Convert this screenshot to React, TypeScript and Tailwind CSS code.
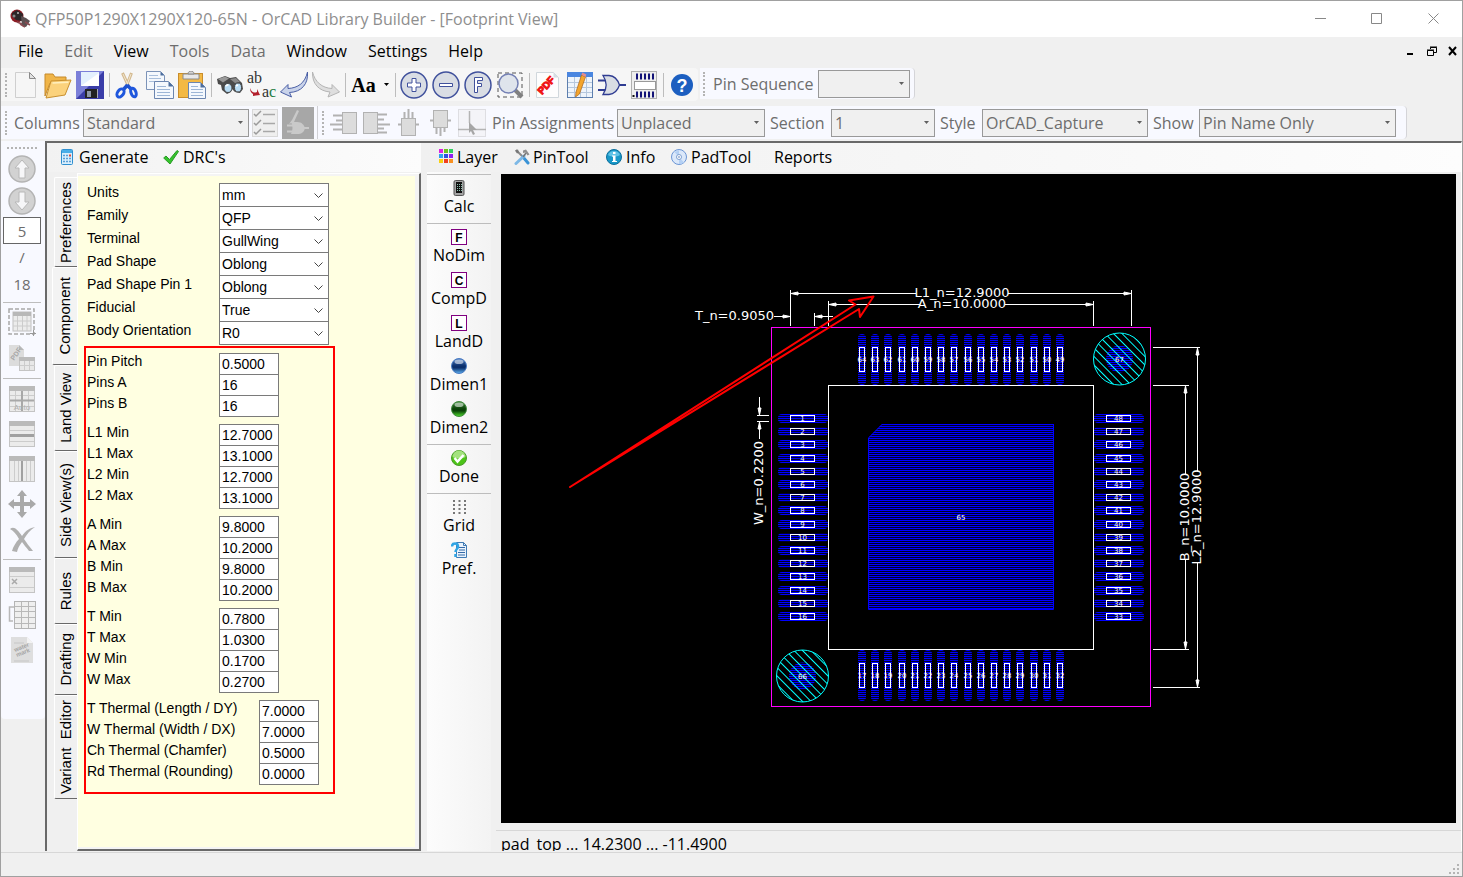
import { useId, useState } from "react";
import type { ReactNode } from "react";

const noop = () => {};

/* ---------- shared controls ---------- */

function Caret() {
  return (
    <svg className="pointer-events-none absolute right-1.5 top-1/2 -mt-0.5" width="5" height="3" viewBox="0 0 5 3" aria-hidden="true">
      <path d="M0 0h5L2.5 3z" fill="#606060" />
    </svg>
  );
}

function ToolSelect({ label, value, labelClass, boxClass }: { label: string; value: string; labelClass: string; boxClass: string }) {
  const id = useId();
  return (
    <div className="flex items-center">
      <label htmlFor={id} className={`shrink-0 whitespace-nowrap text-[#6d6d6d] ${labelClass}`}>
        {label}
      </label>
      <div className={`relative h-7 shrink-0 ${boxClass}`}>
        <select id={id} className="block h-7 w-full appearance-none border border-[#999] bg-[#f0f0f0] pl-[3px] text-[#6d6d6d] outline-none">
          <option>{value}</option>
        </select>
        <Caret />
      </div>
    </div>
  );
}

function Tool({ label, children, className = "w-8" }: { label: string; children: ReactNode; className?: string }) {
  return (
    <button type="button" aria-label={label} className={`flex h-8 shrink-0 items-center justify-center ${className}`}>
      {children}
    </button>
  );
}

function Icon({ children, size = 28, box = 28 }: { children: ReactNode; size?: number; box?: number }) {
  return (
    <svg width={size} height={size} viewBox={`0 0 ${box} ${box}`} fill="none" aria-hidden="true">
      {children}
    </svg>
  );
}

const Sep = () => (
  <div className="flex w-1.5 shrink-0 justify-center">
    <div className="h-6 w-px bg-[#bdbdbd]" />
  </div>
);

const Grip = () => <div className="h-6 w-0 shrink-0 border-l-2 border-dotted border-[#b4b4b4]" />;

/* ---------- main toolbar icons ---------- */

const NewIcon = () => (
  <Icon>
    <path d="M3.500 1.500h14l6 6v19h-20z" fill="#f6f6f6" stroke="#cfcfcf" />
    <path d="M17.500 1.500v6h6z" fill="#e2e2e2" stroke="#8a8a8a" />
  </Icon>
);

const OpenIcon = () => (
  <Icon>
    <path d="M1 3h8l2 3h11v6H6L1 25z" fill="#f0b548" stroke="#c68a2a" />
    <path d="M7 10l20-1-6 15-19 3z" fill="#fbd27c" stroke="#c8902f" />
    <path d="M8.500 12l16-.8" stroke="#fff0c0" strokeWidth="1.500" />
  </Icon>
);

const SaveIcon = () => (
  <Icon>
    <rect width="28" height="28" fill="#7b7fd8" />
    <path d="M0 28L28 0v28z" fill="#3a3da8" />
    <rect x="5" y="1" width="18" height="14" fill="#e4f0fd" />
    <path d="M5 15L23 2v13z" fill="#fff" />
    <rect x="9" y="18" width="12" height="9" fill="#222" />
    <rect x="11" y="20" width="4" height="6" fill="#8e96a8" />
    <rect x="21" y="18" width="1" height="9" fill="#aab" />
  </Icon>
);

const CutIcon = () => (
  <Icon>
    <path d="M8.500 2l6 13M17.500 2l-5 13" stroke="#d3b98f" strokeWidth="3" />
    <path d="M9 3l5.500 12M17 3l-4.500 12" stroke="#f2e7d0" />
    <path d="M13.500 14l-4.500 5M13 14l5 5" stroke="#1d52d0" strokeWidth="3.500" />
    <ellipse cx="6.500" cy="22" rx="3" ry="4.500" stroke="#1f57dd" strokeWidth="3" transform="rotate(35 6.500 22)" />
    <ellipse cx="19.500" cy="21.500" rx="2.500" ry="4.500" stroke="#1f57dd" strokeWidth="3" transform="rotate(-20 19.500 21.500)" />
  </Icon>
);

const CopyIcon = () => (
  <Icon>
    <path d="M.5.5h14l4 4v14H.5z" fill="#f4f8fd" stroke="#7c93b8" />
    <path d="M14.500.5v4h4z" fill="#4d6f9f" />
    <path d="M3 4.500h9M3 7.500h12M3 10.500h12" stroke="#a9bfdc" />
    <path d="M8.500 10.500h14l5 5v12h-19z" fill="#f4f8fd" stroke="#6c86b0" />
    <path d="M22.500 10.500v5h5z" fill="#4d6f9f" />
    <path d="M11 15.500h9M11 18.500h13M11 21.500h13M11 24.500h13" stroke="#9db6d6" />
  </Icon>
);

const PasteIcon = () => (
  <Icon>
    <rect x=".5" y="2.500" width="24" height="24" fill="#f3b944" stroke="#c98d2b" />
    <path d="M5 3h16v5H5z" fill="#e8e8e8" stroke="#8c8c8c" />
    <path d="M10 3c0-4 6-4 6 0z" fill="#d4d4d4" stroke="#8c8c8c" />
    <path d="M10.500 11.500h12l5 5v11h-17z" fill="#f4f8fd" stroke="#6c86b0" />
    <path d="M22.500 11.500v5h5z" fill="#4d6f9f" />
    <path d="M13 15.500h7M13 18.500h12M13 21.500h12M13 24.500h12" stroke="#9db6d6" />
  </Icon>
);

const FindIcon = () => (
  <Icon>
    <path d="M1 8l8-3 5 2 6-1 6 6 1 6-3 4-5-1-3-3-1 3-4 2-5-4-1-5-3-1z" fill="#4b4b4b" />
    <path d="M2 8l7-2.500 4 2-6 4z" fill="#9a9a9a" />
    <path d="M14 8l6-1 4 4-5 1z" fill="#8a8a8a" />
    <ellipse cx="12" cy="17" rx="4" ry="4.500" fill="#b8dcf4" stroke="#444" />
    <ellipse cx="22" cy="16.500" rx="3.500" ry="4.500" fill="#b8dcf4" stroke="#444" />
    <path d="M9.500 15l3-1.500M20 15l2-1" stroke="#fff" strokeWidth="1.500" />
  </Icon>
);

const ReplaceIcon = () => (
  <svg width="30" height="30" viewBox="0 0 30 30" aria-hidden="true" className="overflow-visible font-['Liberation_Serif',serif] text-base">
    <text x="0" y="13" fill="#333">ab</text>
    <path d="M3 18c2 5 4 5 7 4v-3l3 6-7 1v-2c-2-1-3-3-3-6z" fill="#b3202c" />
    <text x="15" y="27" fill="#333">a</text>
    <text x="22" y="27" fill="#1c7a3c">c</text>
  </svg>
);

const UndoIcon = () => (
  <Icon>
    <path d="M27.500 1c1 12-6 20-18 20.500l2 4.500L.5 21 8 13.500v4C18 17 25 12 27.500 1z" fill="#c9d3ea" stroke="#4a5fa5" />
  </Icon>
);

const RedoIcon = () => (
  <Icon>
    <path d="M.5 1C0 13 7 20 18 21l-2 5 11.500-5L20 13.500v4C10 17 3 11 .5 1z" fill="#dedede" stroke="#b4b4b4" />
  </Icon>
);

function RoundIcon({ children }: { children: ReactNode }) {
  return (
    <Icon>
      <circle cx="14" cy="14" r="13" fill="#d9dde4" stroke="#40519c" strokeWidth="1.500" />
      {children}
    </Icon>
  );
}

const PlusIcon = () => (
  <RoundIcon>
    <path d="M12 7.500h4v4.500h4.500v4H16v4.500h-4V16H7.500v-4H12z" fill="#fff" stroke="#40519c" />
  </RoundIcon>
);

const MinusIcon = () => (
  <RoundIcon>
    <path d="M7.500 12.500h13v3h-13z" fill="#fff" stroke="#40519c" />
  </RoundIcon>
);

const FitIcon = () => (
  <RoundIcon>
    <path d="M10.500 6.500h8v3h-5v3h4v3h-4v6h-3z" fill="#fff" stroke="#40519c" />
  </RoundIcon>
);

const ZoomAreaIcon = () => (
  <Icon>
    <rect x="2" y="2" width="24" height="24" stroke="#555" strokeDasharray="4 3" />
    <path d="M19 19l7 7" stroke="#808080" strokeWidth="4" />
    <circle cx="12.500" cy="12.500" r="9.500" fill="#dfe4ec" stroke="#7480b4" strokeWidth="1.500" />
  </Icon>
);

const PdfIcon = () => (
  <Icon>
    <path d="M2.500 1.500h17l5 5v20h-22z" fill="#fdfdfd" stroke="#d0d7dc" />
    <path d="M19.500 1.500v5h5z" fill="#d5dee4" />
    <text x="0" y="0" fontSize="10" fill="#f01414" stroke="#f01414" className="font-['Liberation_Sans',sans-serif] font-bold" transform="translate(8 24) rotate(-48)">PDF</text>
  </Icon>
);

const TablePencilIcon = () => (
  <Icon>
    <rect x="1.500" y="1.500" width="25" height="25" fill="#eef4fb" stroke="#5d7fae" />
    <rect x="1" y="1" width="26" height="5" fill="#4a86e0" />
    <path d="M8.500 6v20M14.500 6v20M20.500 6v20M2 11.500h24M2 16.500h24M2 21.500h24" stroke="#b5c7dd" />
    <path d="M15.500 4l4 2-6 17-4 3 .5-5z" fill="#f4a52c" stroke="#a8641b" strokeWidth=".7" />
    <path d="M15.500 4l4 2 .8-2.500-4-2z" fill="#e58c8c" />
  </Icon>
);

const GateIcon = () => (
  <Icon>
    <path d="M0 9.500h7M0 19h7M20 14h8M0 9.500v1M0 19v-1" stroke="#2f3c92" strokeWidth="1.800" />
    <path d="M5 4.500h6c6 .5 9 5 10.500 9.500C20 18.500 17 23 11 23.500H5c4-6 4-13 0-19z" fill="#d9dde4" stroke="#2f3c92" strokeWidth="1.300" />
  </Icon>
);

const ChipIcon = () => (
  <Icon>
    <rect x="1.500" y=".5" width="25" height="27" fill="#eee" stroke="#b0b0b0" />
    <path d="M6 5.500h19M6 23.500h19" stroke="#141478" strokeWidth="6" strokeDasharray="2 2" />
    <rect x="4.500" y="10.500" width="21" height="8" fill="#fff" stroke="#999" />
    <path d="M2.500 25h2" stroke="#111" strokeWidth="2" />
  </Icon>
);

const HelpIcon = () => (
  <Icon>
    <circle cx="14" cy="14" r="11" fill="#1c5fc0" />
    <text x="14" y="20.500" fontSize="18" textAnchor="middle" fill="#fff" className="font-['Liberation_Sans',sans-serif] font-bold">?</text>
  </Icon>
);

/* ---------- pin toolbar icons ---------- */

const ChecklistIcon = () => (
  <Icon>
    <rect x="1.500" y=".5" width="25" height="27" fill="#efefef" stroke="#d8d8d8" />
    <path d="M3 5l2 2 5-5M3 14l2 2 5-5M3 23l2 2 5-5" stroke="#9a9a9a" strokeWidth="1.500" />
    <path d="M12 5.500h12M12 14.500h12M12 22.500h12" stroke="#a8a8a8" strokeWidth="1.500" />
  </Icon>
);

const PressedGateIcon = () => (
  <Icon size={32} box={32}>
    <path d="M15 3l-5 10-3 4 5-2 5-11z" fill="#c9c9c9" />
    <path d="M5 18.500h6M5 24.500h6M21 21h6" stroke="#c9c9c9" strokeWidth="2" />
    <path d="M9 15h6c5 0 7 3 8 6-1 4-3 6-8 6H9c2-4 2-8 0-12z" fill="#c9c9c9" />
  </Icon>
);

const PartLeftIcon = () => (
  <Icon>
    <rect x="12.500" y="3.500" width="14" height="21" fill="#dcdcdc" stroke="#b2b2b2" />
    <path d="M3 6.500h9M6 11.500h6M0 15.500h12M3 20.500h9" stroke="#b2b2b2" strokeWidth="2" />
  </Icon>
);

const PartRightIcon = () => (
  <Icon>
    <rect x="1.500" y="3.500" width="14" height="21" fill="#dcdcdc" stroke="#b2b2b2" />
    <path d="M16 5.500h9M16 10.500h6M16 15.500h12M16 19.500h6M16 23.500h9" stroke="#b2b2b2" strokeWidth="2" />
  </Icon>
);

const PartTopIcon = () => (
  <Icon>
    <rect x="7.500" y="9.500" width="14" height="17" fill="#dcdcdc" stroke="#b2b2b2" />
    <path d="M10.500 3v6M14.500 0v9M18.500 3v6M4 15.500h3M22 15.500h3" stroke="#b2b2b2" strokeWidth="2" />
  </Icon>
);

const PartBottomIcon = () => (
  <Icon>
    <rect x="7.500" y="1.500" width="14" height="17" fill="#dcdcdc" stroke="#b2b2b2" />
    <path d="M10.500 19v6M14.500 19v8M18.500 19v4M4 11.500h3M22 11.500h3" stroke="#b2b2b2" strokeWidth="2" />
  </Icon>
);

const OriginIcon = () => (
  <Icon>
    <rect x=".5" y=".5" width="27" height="27" fill="#f4f4f8" stroke="#dedee2" />
    <path d="M11.500 2v12M0 20.500h28" stroke="#b4b4b4" strokeWidth="1.500" />
    <path d="M11 13l8 8h-4l2 4-2 1-2-4-2 2z" fill="#a6a6a6" />
  </Icon>
);

/* ---------- left strip icons ---------- */

function ArrowButtonIcon({ down = false }: { down?: boolean }) {
  return (
    <Icon>
      <circle cx="14" cy="14" r="13" fill="#d2d2d2" stroke="#b4b4b4" strokeWidth="1.500" />
      <path d={down ? "M14 23l-7-8h4V5h6v10h4z" : "M14 5l-7 8h4v10h6V13h4z"} fill="#f6f6f8" stroke="#b8b8b8" />
    </Icon>
  );
}

const TableFrame = ({ children }: { children?: ReactNode }) => (
  <>
    <rect x="1.500" y="1.500" width="25" height="25" fill="#ebebeb" stroke="#c4c4c4" />
    <rect x="1" y="1" width="26" height="5" fill="#bababa" />
    {children}
  </>
);

const SelectTableIcon = () => (
  <Icon>
    <rect x="1" y="1" width="25" height="25" stroke="#a8a8a8" strokeWidth="1.500" strokeDasharray="4 2" />
    <rect x="5" y="4" width="18" height="19" fill="#ececec" stroke="#c0c0c0" />
    <rect x="5" y="4" width="18" height="4" fill="#b8b8b8" />
    <path d="M9.500 8v15M14.500 8v15M19 8v15M5 13h18M5 18h18" stroke="#ccc" />
    <path d="M22 25.500h6M25.500 22v6" stroke="#999" />
  </Icon>
);

const PdfTableIcon = () => (
  <Icon>
    <path d="M1 1h10l5 5v16H1z" fill="#dcdcdc" />
    <path d="M11 1v5h5z" fill="#b8b8b8" />
    <text x="0" y="0" fontSize="7" fill="#a6a6a6" className="font-['Liberation_Sans',sans-serif] font-bold" transform="translate(6 17) rotate(-55)">PDF</text>
    <rect x="11.500" y="13.500" width="15" height="13" fill="#e8e8e8" stroke="#c4c4c4" />
    <rect x="11" y="13" width="16" height="4" fill="#bcbcbc" />
    <path d="M16.500 17v9M21.500 17v9M12 21.500h15" stroke="#ccc" />
  </Icon>
);

const AutoTableIcon = () => (
  <Icon>
    <TableFrame>
      <path d="M7.500 6v20M20.500 6v20M2 10.500h24M2 21.500h24" stroke="#ccc" />
      <path d="M14 6v20M2 15.500h24" stroke="#a8a8a8" strokeWidth="2" />
      <text x="14" y="25" fontSize="8" textAnchor="middle" fill="#b0b0b0" className="font-['Liberation_Sans',sans-serif]">Auto</text>
    </TableFrame>
  </Icon>
);

const RowTableIcon = () => (
  <Icon>
    <TableFrame>
      <path d="M2 10.500h24M2 21.500h24" stroke="#ccc" />
      <path d="M2 15.500h24" stroke="#a0a0a0" strokeWidth="3" />
    </TableFrame>
  </Icon>
);

const ColumnTableIcon = () => (
  <Icon>
    <TableFrame>
      <path d="M6.500 6v20M10.500 6v20M18.500 6v20M22.500 6v20" stroke="#ccc" />
      <path d="M14 6v20" stroke="#a0a0a0" strokeWidth="2" />
    </TableFrame>
  </Icon>
);

const MoveIcon = () => (
  <Icon>
    <path d="M14 0l5 6h-3v6h6V9l6 5-6 5v-3h-6v6h3l-5 6-5-6h3v-6H6v3l-6-5 6-5v3h6V6H9z" fill="#a9a9a9" />
  </Icon>
);

const DeleteIcon = () => (
  <Icon>
    <path d="M2 4c4-3 7 0 12 7 4-6 8-8 13-9-5 3-8 7-11 12 4 6 6 8 9 12h-4c-3-4-5-6-7-9-3 4-4 6-5 10l-5-1c1-4 4-9 7-12C8 9 6 6 2 4z" fill="#b0b0b0" />
  </Icon>
);

const ClearTableIcon = () => (
  <Icon>
    <TableFrame>
      <path d="M2 10.500h24M2 21.500h24" stroke="#ccc" />
      <path d="M4 13l5 5M9 13l-5 5" stroke="#aaa" strokeWidth="1.500" />
    </TableFrame>
  </Icon>
);

const GridCopyIcon = () => (
  <Icon>
    <path d="M6 6H1.500v14H5" stroke="#b8b8b8" strokeWidth="1.500" />
    <rect x="6.500" y=".5" width="21" height="27" fill="#efefef" stroke="#b4b4b4" />
    <path d="M13.500 1v26M20.500 1v26M7 5.500h20M7 10.500h20M7 16.500h20M7 22.500h20" stroke="#b8b8b8" />
  </Icon>
);

const WatermarkIcon = () => (
  <Icon>
    <path d="M3 1h16l6 6v20H3z" fill="#dedede" />
    <path d="M19 1v6h6z" fill="#f3f3f3" />
    <path d="M6 7h10M6 25h15" stroke="#c6c6c6" />
    <g fontSize="6" fill="#a4a4a4" className="font-['Liberation_Sans',sans-serif] font-bold">
      <text x="0" y="0" transform="translate(7 16) rotate(-22)">water</text>
      <text x="0" y="0" transform="translate(9 21) rotate(-22)">mark</text>
    </g>
  </Icon>
);

/* ---------- small 16px icons ---------- */

const GenerateIcon = () => (
  <Icon size={16} box={16}>
    <rect x="2.500" y=".5" width="11" height="15" rx="1" fill="#d9eefc" stroke="#2f8fd0" />
    <rect x="3" y="1" width="10" height="3" fill="#4aaee8" />
    <path d="M4 6.500h2M7 6.500h2M4 9.500h2M7 9.500h2M10 9.500h2M4 12.500h2M7 12.500h2M10 12.500h2" stroke="#5a9ed6" strokeWidth="1.500" />
    <path d="M10 6.500h2" stroke="#e04a3a" strokeWidth="2" />
  </Icon>
);

const TickIcon = () => (
  <Icon size={16} box={16}>
    <path d="M.7 9L3 7l3.500 3.500L14 1.500l1.500 1L7 15z" fill="#35c42d" stroke="#2a9a26" />
  </Icon>
);

const layerColors = ["#e020e0", "#70c020", "#30d060", "#30a0f0", "#3050e0", "#9020f0", "#f8d010", "#f04020", "#f89020"];

const LayerIcon = () => (
  <Icon size={16} box={16}>
    {layerColors.map((c, i) => (
      <rect key={c} x={1 + (i % 3) * 5} y={Math.floor(i / 3) * 5} width="4" height="4" fill={c} />
    ))}
  </Icon>
);

const PinToolIcon = () => (
  <Icon size={16} box={16}>
    <path d="M2 1l7 7" stroke="#8a8a8a" strokeWidth="2" />
    <path d="M1 1.500l3-1 1 3-2 1z" fill="#777" />
    <path d="M9 8l5 6" stroke="#3a93d6" strokeWidth="3" strokeLinecap="round" />
    <path d="M10 7L2 14.500" stroke="#7db8e6" strokeWidth="3" strokeLinecap="round" />
    <path d="M9 1.500l3-1 3.500 5-2 1-2-3-2.500.5z" fill="#8f8f8f" />
    <path d="M12 4L9 8" stroke="#777" strokeWidth="1.500" />
  </Icon>
);

const InfoIcon = () => (
  <Icon size={16} box={16}>
    <circle cx="8" cy="8" r="7.500" fill="#1898c8" stroke="#0c6f9c" />
    <path d="M2 6a6.500 6.500 0 0112 0c-3 2-9 2-12 0z" fill="#5fc3e6" />
    <rect x="7" y="3" width="2.500" height="2" fill="#fff" />
    <path d="M6 6.500h3.500V12H11v1H6v-1h1V7.500H6z" fill="#fff" />
  </Icon>
);

const DiscIcon = () => (
  <Icon size={16} box={16}>
    <circle cx="8" cy="8" r="7.500" fill="#dbe8fa" stroke="#6a94d4" />
    <path d="M8 8L3 2.500A7 7 0 008 1zM8 8l5 5.500A7 7 0 018 15z" fill="#b4d0f4" />
    <circle cx="8" cy="8" r="2.500" fill="#fff" stroke="#7c9fd0" />
    <circle cx="8" cy="8" r=".8" fill="#4a6fb0" />
  </Icon>
);

const CalcIcon = () => (
  <Icon size={16} box={16}>
    <rect x="3" y=".5" width="10" height="15" rx="1.500" fill="#a4a4a4" stroke="#555" />
    <rect x="5" y="2" width="6" height="11" fill="#111" />
    <path d="M6 4.500h5M6 6.500h5M6 8.500h5M6 10.500h5" stroke="#8cc0b0" strokeDasharray="1 1" />
  </Icon>
);

function LetterIcon({ letter }: { letter: string }) {
  return (
    <Icon size={16} box={16}>
      <rect x=".5" y=".5" width="15" height="15" fill="#fff" stroke="#800080" />
      <text x="8" y="12.500" fontSize="12" textAnchor="middle" fill="#000" className="font-['Liberation_Sans',sans-serif] font-bold">
        {letter}
      </text>
    </Icon>
  );
}

function BallIcon({ id, edge, dark, light }: { id: string; edge: string; dark: string; light: string }) {
  return (
    <Icon size={16} box={16}>
      <defs>
        <linearGradient id={id} x1="0" y1="0" x2="0" y2="1">
          <stop offset="0" stopColor={edge} />
          <stop offset=".5" stopColor={dark} />
          <stop offset=".62" stopColor={dark} />
          <stop offset="1" stopColor={light} />
        </linearGradient>
      </defs>
      <circle cx="8" cy="8" r="7.500" fill={`url(#${id})`} stroke={edge} />
      <ellipse cx="8" cy="3.800" rx="4.500" ry="2.300" fill="#fff" opacity=".55" />
    </Icon>
  );
}

const DoneIcon = () => (
  <Icon size={16} box={16}>
    <circle cx="8" cy="8" r="7.500" fill="#4cc418" stroke="#4a9a2a" />
    <path d="M1.500 7a6.500 6.500 0 0113 0c-4 2-9 2-13 0z" fill="#a3e27e" />
    <path d="M3.500 8l3 3.500L12.500 5" stroke="#fff" strokeWidth="2.500" />
  </Icon>
);

const GridIcon = () => (
  <Icon size={16} box={16}>
    <path d="M2 2h13M2 6h13M2 10h13M2 14h13" stroke="#777" strokeWidth="2" strokeDasharray="2 3.500" />
  </Icon>
);

const PrefIcon = () => (
  <Icon size={16} box={16}>
    <path d="M5.500.5h7l3 3v12h-10z" fill="#eaf3fc" stroke="#3f7ab4" />
    <path d="M12.500.5v3h3" stroke="#3f7ab4" />
    <path d="M8 5.500h6M8 8h6M7 10.500h7M7 13h7" stroke="#356aa8" />
    <path d="M1 4.500c0-4 6-4 6 0C7 7 4.500 7 4.500 10M4.500 12v3" stroke="#2fa4e4" strokeWidth="2.500" />
  </Icon>
);

/* ---------- top bars ---------- */

function TitleBar() {
  return (
    <header className="flex h-9 items-center bg-white pb-px pl-2 text-[#8e8e8e]">
      <svg width="22" height="22" viewBox="0 0 22 22" aria-hidden="true">
        <circle cx="8" cy="8" r="6.500" fill="#8c1c24" />
        <path d="M3 5l5-3 6 4-1 7-6-1-4-4z" fill="#2c2628" />
        <path d="M12 8l5 2 4 3-4 6-4-1z" fill="#5c5052" />
        <path d="M8 14l5 2M11 16l5 3M16 14l5 3" stroke="#8a4a50" strokeWidth="1.500" />
        <circle cx="5" cy="8" r="1.500" fill="#888" />
        <circle cx="9" cy="5" r="1" fill="#bbb" />
      </svg>
      <h1 className="ml-1 grow whitespace-nowrap">QFP50P1290X1290X120-65N - OrCAD Library Builder - [Footprint View]</h1>
      <button type="button" aria-label="Minimize" className="flex h-9 w-14 items-center justify-center">
        <Icon size={11} box={11}><path d="M0 5.500h11" stroke="#888" /></Icon>
      </button>
      <button type="button" aria-label="Maximize" className="flex h-9 w-14 items-center justify-center">
        <Icon size={11} box={11}><path d="M.5.5h10v10H.5z" stroke="#888" /></Icon>
      </button>
      <button type="button" aria-label="Close" className="flex h-9 w-[58px] items-center justify-center">
        <Icon size={11} box={11}><path d="M.5.5l10 10M10.500.5l-10 10" stroke="#888" /></Icon>
      </button>
    </header>
  );
}

const menus = [
  { name: "File", enabled: true },
  { name: "Edit", enabled: false },
  { name: "View", enabled: true },
  { name: "Tools", enabled: false },
  { name: "Data", enabled: false },
  { name: "Window", enabled: true },
  { name: "Settings", enabled: true },
  { name: "Help", enabled: true },
];

function MenuBar() {
  return (
    <nav className="flex h-[31px] items-center gap-px pb-[3px] pl-[7px]">
      {menus.map((m) => (
        <button key={m.name} type="button" disabled={!m.enabled} className="px-2.5 text-black disabled:text-[#6d6d6d]">
          {m.name}
        </button>
      ))}
      <div className="ml-auto flex gap-[11px] pr-1">
        <button type="button" aria-label="Minimize document">
          <Icon size={10} box={10}><path d="M1 8h6" stroke="#000" strokeWidth="2" /></Icon>
        </button>
        <button type="button" aria-label="Restore document">
          <Icon size={10} box={10}>
            <path d="M3.500 3V1.500h6v5H7M3 1h7" stroke="#000" />
            <path d="M.5 4.500h6v5h-6zM0 4h7" stroke="#000" />
          </Icon>
        </button>
        <button type="button" aria-label="Close document">
          <Icon size={10} box={10}><path d="M1 1l7 8M8 1L1 9" stroke="#000" strokeWidth="2" /></Icon>
        </button>
      </div>
    </nav>
  );
}

function MainToolbar() {
  return (
    <div className="flex h-[33px]">
      <div className="flex shrink-0 items-center rounded-r bg-[#f6f6f6] pl-1">
        <Grip />
        <div className="w-[3px] shrink-0" />
        <Tool label="New"><NewIcon /></Tool>
        <Tool label="Open"><OpenIcon /></Tool>
        <Tool label="Save"><SaveIcon /></Tool>
        <Sep />
        <Tool label="Cut"><CutIcon /></Tool>
        <Tool label="Copy"><CopyIcon /></Tool>
        <Tool label="Paste"><PasteIcon /></Tool>
        <Sep />
        <Tool label="Find"><FindIcon /></Tool>
        <Tool label="Replace"><ReplaceIcon /></Tool>
        <Tool label="Undo"><UndoIcon /></Tool>
        <Tool label="Redo"><RedoIcon /></Tool>
        <Sep />
        <Tool label="Font" className="w-11">
          <span className="font-['Liberation_Serif',serif] text-xl font-bold text-black">Aa</span>
          <svg className="ml-2" width="5" height="3" viewBox="0 0 5 3" aria-hidden="true"><path d="M0 0h5L2.500 3z" fill="#000" /></svg>
        </Tool>
        <Sep />
        <Tool label="Zoom in"><PlusIcon /></Tool>
        <Tool label="Zoom out"><MinusIcon /></Tool>
        <Tool label="Zoom fit"><FitIcon /></Tool>
        <Tool label="Zoom area"><ZoomAreaIcon /></Tool>
        <Sep />
        <Tool label="Export PDF"><PdfIcon /></Tool>
        <Tool label="Edit table"><TablePencilIcon /></Tool>
        <Tool label="Symbol"><GateIcon /></Tool>
        <Tool label="Footprint"><ChipIcon /></Tool>
        <Sep />
        <Tool label="Help"><HelpIcon /></Tool>
      </div>
      <div className="ml-0.5 flex h-[31px] shrink-0 items-center rounded-r border-r border-[#d4d4d8] bg-[#f8f9ff] pl-[3px] pr-1">
        <Grip />
        <div className="w-2" />
        <ToolSelect label="Pin Sequence" value="" labelClass="w-[105px]" boxClass="w-[92px]" />
      </div>
    </div>
  );
}

function PinToolbar() {
  return (
    <div className="mt-[5px] flex h-[33px]">
      <div className="flex shrink-0 items-center bg-[#f8f9ff] pl-1">
        <Grip />
        <div className="w-[7px]" />
        <ToolSelect label="Columns" value="Standard" labelClass="w-[69px]" boxClass="w-[166px]" />
        <Tool label="Check list"><ChecklistIcon /></Tool>
        <button type="button" aria-label="Place gate" className="ml-px bg-[#a7a7a7]"><PressedGateIcon /></button>
        <div className="w-1 self-stretch border-r border-[#d0d0d4]" />
      </div>
      <div className="flex shrink-0 items-center rounded-r border-r border-[#d4d4d8] bg-[#f8f9ff] pl-1 pr-2.5">
        <Grip />
        <div className="w-1" />
        <Tool label="Pins left"><PartLeftIcon /></Tool>
        <Tool label="Pins right"><PartRightIcon /></Tool>
        <Tool label="Pins top"><PartTopIcon /></Tool>
        <Tool label="Pins bottom"><PartBottomIcon /></Tool>
        <Tool label="Origin"><OriginIcon /></Tool>
        <div className="w-1" />
        <ToolSelect label="Pin Assignments" value="Unplaced" labelClass="w-[125px]" boxClass="w-[148px]" />
        <div className="w-[5px]" />
        <ToolSelect label="Section" value="1" labelClass="w-[61px]" boxClass="w-[104px]" />
        <div className="w-[5px]" />
        <ToolSelect label="Style" value="OrCAD_Capture" labelClass="w-[42px]" boxClass="w-[166px]" />
        <div className="w-[5px]" />
        <ToolSelect label="Show" value="Pin Name Only" labelClass="w-[46px]" boxClass="w-[197px]" />
      </div>
    </div>
  );
}

/* ---------- left strip ---------- */

const StripSep = ({ className = "" }: { className?: string }) => <div className={`h-px w-[38px] shrink-0 bg-[#bdbdbd] ${className}`} />;

function PageStrip() {
  return (
    <aside className="w-11 shrink-0">
      <div className="flex h-[578px] flex-col items-center rounded-b bg-[#f8f9ff] pr-0.5 pt-1.5">
        <div className="h-0 w-[30px] shrink-0 border-t-2 border-dotted border-[#b4b4b4]" />
        <div className="h-1 shrink-0" />
        <Tool label="Previous page"><ArrowButtonIcon /></Tool>
        <Tool label="Next page"><ArrowButtonIcon down /></Tool>
        <input aria-label="Page" value="5" onChange={noop} className="h-[27px] w-[38px] shrink-0 border border-[#666] bg-white text-center text-[15px] text-[#6d6d6d]" />
        <span className="h-[27px] shrink-0 text-[15px] leading-[27px] text-[#6d6d6d]">/</span>
        <span className="h-[27px] shrink-0 text-[15px] leading-[27px] text-[#6d6d6d]">18</span>
        <StripSep className="mt-1" />
        <Tool label="Select table" className="mt-[3px] w-8"><SelectTableIcon /></Tool>
        <Tool label="Export table" className="my-1 w-8"><PdfTableIcon /></Tool>
        <StripSep />
        <Tool label="Auto size" className="mt-1 w-8"><AutoTableIcon /></Tool>
        <Tool label="Row" className="mt-[3px] w-8"><RowTableIcon /></Tool>
        <Tool label="Column" className="mt-[3px] w-8"><ColumnTableIcon /></Tool>
        <Tool label="Move" className="mt-[3px] w-8"><MoveIcon /></Tool>
        <Tool label="Delete" className="mt-[3px] w-8"><DeleteIcon /></Tool>
        <StripSep className="mt-1" />
        <Tool label="Clear" className="mt-1 w-8"><ClearTableIcon /></Tool>
        <Tool label="Grid" className="mt-[3px] w-8"><GridCopyIcon /></Tool>
        <Tool label="Watermark" className="mt-[3px] w-8"><WatermarkIcon /></Tool>
      </div>
    </aside>
  );
}

/* ---------- component form ---------- */

const tabs = [
  { name: "Preferences", className: "h-[90px]" },
  { name: "Component", className: "h-[98px]" },
  { name: "Land View", className: "h-[86px]" },
  { name: "Side View(s)", className: "h-[107px]" },
  { name: "Rules", className: "h-[66px]" },
  { name: "Drafting", className: "h-[71px]" },
  { name: "Variant  Editor", className: "h-[104px]" },
];

const choices = [
  ["Units", "mm"],
  ["Family", "QFP"],
  ["Terminal", "GullWing"],
  ["Pad Shape", "Oblong"],
  ["Pad Shape Pin 1", "Oblong"],
  ["Fiducial", "True"],
  ["Body Orientation", "R0"],
];

const fieldGroups = [
  [["Pin Pitch", "0.5000"], ["Pins A", "16"], ["Pins B", "16"]],
  [["L1 Min", "12.7000"], ["L1 Max", "13.1000"], ["L2 Min", "12.7000"], ["L2 Max", "13.1000"]],
  [["A Min", "9.8000"], ["A Max", "10.2000"], ["B Min", "9.8000"], ["B Max", "10.2000"]],
  [["T Min", "0.7800"], ["T Max", "1.0300"], ["W Min", "0.1700"], ["W Max", "0.2700"]],
];

const thermalFields = [
  ["T Thermal (Length / DY)", "7.0000"],
  ["W Thermal (Width / DX)", "7.0000"],
  ["Ch Thermal (Chamfer)", "0.5000"],
  ["Rd Thermal (Rounding)", "0.0000"],
];

function Choice({ label, value }: { label: string; value: string }) {
  const id = useId();
  return (
    <div className="flex h-[23px] items-start">
      <label htmlFor={id} className="w-[132px] leading-[19px]">{label}</label>
      <div className="relative w-[110px]">
        <select id={id} className="block h-6 w-full appearance-none border border-[#7a7a7a] bg-white pl-0.5 text-black outline-none">
          <option>{value}</option>
        </select>
        <svg className="pointer-events-none absolute right-1.5 top-[10px]" width="9" height="6" viewBox="0 0 9 6" fill="none" aria-hidden="true">
          <path d="M.5.5l4 4 4-4" stroke="#444" />
        </svg>
      </div>
    </div>
  );
}

function Field({ label, value, wide = false }: { label: string; value: string; wide?: boolean }) {
  const id = useId();
  const [text, setText] = useState(value);
  return (
    <div className="flex h-[21px] items-start">
      <label htmlFor={id} className={`whitespace-nowrap leading-[17px] ${wide ? "w-[172px]" : "w-[132px]"}`}>{label}</label>
      <input
        id={id}
        value={text}
        onChange={(e) => setText(e.target.value)}
        className="h-[22px] w-[60px] border border-[#7a7a7a] bg-white pl-0.5 text-black outline-none"
      />
    </div>
  );
}

function ComponentPanel() {
  return (
    <section className="flex w-[374px] shrink-0 flex-col">
      <div className="flex h-[29px] shrink-0 items-center bg-linear-to-r from-[#f2f2f2] to-[#fcfcfc] pb-px pl-3">
        <button type="button" className="flex w-[104px] items-center gap-1"><GenerateIcon />Generate</button>
        <button type="button" className="flex items-center gap-1"><TickIcon />DRC's</button>
      </div>
      <div className="flex grow pt-px font-['Liberation_Sans',Arial,sans-serif] text-sm text-black">
        <div role="tablist" className="flex w-[30px] shrink-0 flex-col items-end pt-1">
          {tabs.map((t) => {
            const active = t.name === "Component";
            return (
              <button
                key={t.name}
                type="button"
                role="tab"
                aria-selected={active}
                className={`flex shrink-0 items-center justify-center rounded-l-xs border-b border-l border-t border-b-[#696969] border-l-white border-t-white text-[15px] ${t.className} ${active ? "w-[25px] bg-[#f3f3f3]" : "w-[23px] bg-[#f0f0f0]"}`}
              >
                <span className="rotate-180 whitespace-pre [writing-mode:vertical-rl]">{t.name}</span>
              </button>
            );
          })}
        </div>
        <div className="grow border-b-2 border-l border-r-2 border-t border-b-[#696969] border-l-white border-r-[#696969] border-t-white">
          <div className="h-full border-b-2 border-r-4 border-t-2 border-[#f4f4f4] bg-[#ffffe1] pt-[7px]">
            <div className="pl-[9px]">
              {choices.map(([label, value]) => <Choice key={label} label={label} value={value} />)}
            </div>
            <div className="ml-1.5 mt-0.5 w-[251px] border-2 border-[#f00] pb-2 pl-px pt-[5px]">
              {fieldGroups.map((group) => (
                <div key={group[0][0]} className="mb-2">
                  {group.map(([label, value]) => <Field key={label} label={label} value={value} />)}
                </div>
              ))}
              {thermalFields.map(([label, value]) => <Field key={label} label={label} value={value} wide />)}
            </div>
          </div>
        </div>
      </div>
    </section>
  );
}

/* ---------- footprint canvas ---------- */

const pinIndexes = Array.from({ length: 16 }, (_, i) => i);
const pinOffset = (i: number) => Math.round(i * 13.2);

function SidePad({ x, y, pin }: { x: number; y: number; pin: number }) {
  return (
    <g>
      <rect x={x} y={y - 4} width="50" height="9" rx="4" fill="url(#copper)" />
      <rect x={x + 12.5} y={y - 2.5} width="24" height="6" fill="none" stroke="#fff" />
      <text x={x + 24.5} y={y + 3} fill="#fff">{pin}</text>
    </g>
  );
}

function EndPad({ x, y, pin }: { x: number; y: number; pin: number }) {
  return (
    <g>
      <rect x={x - 4} y={y} width="8" height="51" rx="4" fill="url(#copper)" />
      <rect x={x - 2.5} y={y + 13.5} width="5" height="24" fill="none" stroke="#fff" />
      <text x={x} y={y + 28} fill="#fff">{pin}</text>
    </g>
  );
}

function Fiducial({ cx, cy, pin }: { cx: number; cy: number; pin: number }) {
  return (
    <g>
      <circle cx={cx} cy={cy} r="13.500" fill="url(#copper)" />
      <circle cx={cx} cy={cy} r="26" fill="url(#mask)" stroke="#0ff" />
      <text x={cx} y={cy + 3} fill="#fff">{pin}</text>
    </g>
  );
}

function FootprintCanvas() {
  return (
    <svg className="block h-full w-full" viewBox="501 174 955 649" preserveAspectRatio="xMidYMid meet" role="img" aria-label="Footprint">
      <defs>
        <pattern id="copper" width="2" height="2" patternUnits="userSpaceOnUse">
          <rect width="2" height="2" fill="#000028" />
          <rect width="2" height="1" fill="#00f" />
        </pattern>
        <pattern id="mask" width="6" height="6" patternUnits="userSpaceOnUse" patternTransform="rotate(45)">
          <path d="M0 .5h6" stroke="#0ff" />
        </pattern>
      </defs>

      <g fill="none" shapeRendering="crispEdges">
        <rect x="771.500" y="327.500" width="379" height="379" stroke="#f0f" />
        <rect x="828.500" y="385.500" width="265" height="264" stroke="#fff" />
      </g>
      <path d="M882 424h172v186H868V438z" fill="url(#copper)" />
      <path d="M882 424.500h171.500v185H868.500V438z" fill="none" stroke="#00f" />

      <g fontSize="7" textAnchor="middle" className="font-['DejaVu_Sans',sans-serif]">
        {pinIndexes.map((i) => <SidePad key={i} x={778} y={418 + pinOffset(i)} pin={i + 1} />)}
        {pinIndexes.map((i) => <SidePad key={i} x={1094} y={418 + pinOffset(i)} pin={48 - i} />)}
        {pinIndexes.map((i) => <EndPad key={i} x={862 + pinOffset(i)} y={334} pin={64 - i} />)}
        {pinIndexes.map((i) => <EndPad key={i} x={862 + pinOffset(i)} y={650} pin={17 + i} />)}
        <Fiducial cx={1119.5} cy={359} pin={67} />
        <Fiducial cx={802.5} cy={676} pin={66} />
        <text x="961" y="520" fill="#fff">65</text>
      </g>

      {/* dimension lines */}
      <g stroke="#fff" fill="none" shapeRendering="crispEdges">
        <path d="M790.500 290v36M1131.500 290v36M791 293.500h125M1008 293.500h123" />
        <path d="M828.500 301v25M1093.500 301v25M829 304.500h91M1005 304.500h88" />
        <path d="M774 316.500h16M814.500 313v13M815 316.500h18" />
        <path d="M1153 347.500h47M1153 687.500h47M1197.500 348v123M1197.500 562v125" />
        <path d="M1153 385.500h36M1153 649.500h36M1185.500 386v88M1185.500 560v89" />
        <path d="M757 415.500h12M757 421.500h12M759.500 397v18M759.500 422v17" />
      </g>
      <path
        d="M791 293.500l7-1.500v3zM1131 293.500l-7-1.500v3zM829 304.500l7-1.500v3zM1093 304.500l-7-1.500v3zM790 316.500l-7-1.500v3zM815 316.500l7-1.500v3zM1197.500 348l-1.500 7h3zM1197.500 687l-1.500-7h3zM1185.500 386l-1.500 7h3zM1185.500 649l-1.500-7h3zM759.500 415l-1.500-7h3zM759.500 422l-1.500 7h3z"
        fill="#fff"
        stroke="#fff"
      />
      <g fontSize="13" fill="#fff" textAnchor="middle" className="font-['DejaVu_Sans',sans-serif]">
        <text x="962" y="297">L1_n=12.9000</text>
        <text x="962" y="308">A_n=10.0000</text>
        <text x="774" y="320" textAnchor="end">T_n=0.9050</text>
        <text x="0" y="0" transform="translate(763 483) rotate(-90)">W_n=0.2200</text>
        <text x="0" y="0" transform="translate(1189 517) rotate(-90)">B_n=10.0000</text>
        <text x="0" y="0" transform="translate(1201 517) rotate(-90)">L2_n=12.9000</text>
      </g>

      <path d="M570 487L855.500 304.500l-6.500-4 24.500-4L860 317l-1-8z" fill="none" stroke="#f00" strokeWidth="2" strokeLinejoin="round" />
    </svg>
  );
}

function SideTool({ label, children }: { label: string; children: ReactNode }) {
  return (
    <button type="button" className="flex h-[43px] w-full shrink-0 flex-col items-center">
      {children}
      <span className="leading-5">{label}</span>
    </button>
  );
}

const SideSep = () => <div className="h-1.5 w-full shrink-0 border-t border-[#bdbdbd]" />;

function FootprintPanel() {
  return (
    <section className="flex min-w-0 grow flex-col">
      <div className="flex h-[29px] shrink-0 items-center bg-linear-to-r from-[#f0f0f0] to-[#fdfdfd] pb-px pl-[17px]">
        <button type="button" className="flex w-[76px] items-center gap-[3px]"><LayerIcon />Layer</button>
        <button type="button" className="flex w-[92px] items-center gap-[3px]"><PinToolIcon />PinTool</button>
        <button type="button" className="flex w-[65px] items-center gap-1"><InfoIcon />Info</button>
        <button type="button" className="flex w-[103px] items-center gap-1"><DiscIcon />PadTool</button>
        <button type="button">Reports</button>
      </div>
      <div className="flex grow">
        <div className="flex w-[75px] shrink-0 flex-col items-start pl-1.5">
          <div className="flex w-16 grow flex-col items-center bg-linear-to-r from-[#fcfcfc] to-[#f3f3f3] pt-0.5">
            <SideSep />
            <SideTool label="Calc"><CalcIcon /></SideTool>
            <SideSep />
            <SideTool label="NoDim"><LetterIcon letter="F" /></SideTool>
            <SideTool label="CompD"><LetterIcon letter="C" /></SideTool>
            <SideTool label="LandD"><LetterIcon letter="L" /></SideTool>
            <SideTool label="Dimen1"><BallIcon id="ball-blue" edge="#4a7cc4" dark="#0b2f6c" light="#5fb4f4" /></SideTool>
            <SideTool label="Dimen2"><BallIcon id="ball-green" edge="#3f8a3c" dark="#0a4208" light="#4fe02c" /></SideTool>
            <SideSep />
            <SideTool label="Done"><DoneIcon /></SideTool>
            <SideSep />
            <SideTool label="Grid"><GridIcon /></SideTool>
            <SideTool label="Pref."><PrefIcon /></SideTool>
          </div>
        </div>
        <div className="flex min-w-0 grow flex-col pt-0.5">
          <div className="mx-[5px] h-[649px] grow bg-black"><FootprintCanvas /></div>
          <div className="mt-[7px] h-[21px] shrink-0 overflow-hidden border-t border-[#d7d7d7] pl-[5px] leading-[26px] text-black">pad_top ... 14.2300 ... -11.4900</div>
        </div>
      </div>
    </section>
  );
}

export default function App() {
  return (
    <div className="flex min-h-screen flex-col overflow-hidden border border-[#a0a0a0] bg-[#f0f0f0] font-['Open_Sans','Noto_Sans',sans-serif] text-base leading-5 text-black">
      <TitleBar />
      <MenuBar />
      <MainToolbar />
      <PinToolbar />
      <main className="mt-0.5 flex grow">
        <PageStrip />
        <div className="flex min-w-0 grow border-l-2 border-r border-t-2 border-[#696969] border-r-white">
          <ComponentPanel />
          <FootprintPanel />
        </div>
      </main>
      <footer className="mt-px h-[24px] shrink-0 border-t border-[#d7d7d7]">
        <svg className="ml-auto mr-0.5 mt-2.5" width="12" height="12" viewBox="0 0 12 12" aria-hidden="true">
          <path d="M9 1h2v2H9zM5 5h2v2H5zM9 5h2v2H9zM1 9h2v2H1zM5 9h2v2H5zM9 9h2v2H9z" fill="#b4b4b4" />
        </svg>
      </footer>
    </div>
  );
}
